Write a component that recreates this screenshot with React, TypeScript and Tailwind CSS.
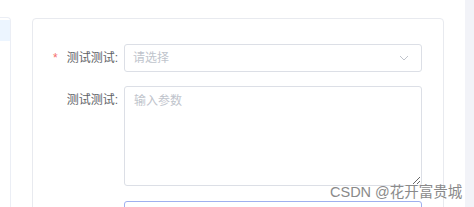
import React from 'react';

const font = { fontFamily: '"Liberation Sans", "Noto Sans CJK SC", sans-serif' };

const Label = ({ text, required }: { text: string; required?: boolean }) => (
  <div className="w-[91px] shrink-0 pr-[6px] text-right text-[12px] leading-[28px] text-[#606266]">
    {required && <span className="mr-[9px] text-[#f56c6c]">*</span>}
    {text}
  </div>
);

const App: React.FC = () => {
  return (
    <div className="relative flex h-[207px] w-[474px] overflow-hidden bg-white" style={font}>
      {/* left side menu edge */}
      <div className="mt-[17px] w-[11px] shrink-0 rounded-tr-[4px] border-r border-t border-[#ebeef5]">
        <div className="mt-[2px] h-[21px] bg-[#ecf5ff]" />
      </div>

      {/* main card */}
      <div className="ml-[21px] mt-[18px] h-[240px] w-[412px] shrink-0 rounded-[4px] border border-[#e8eaef] pt-[25px]">
        <div className="flex">
          <Label text="测试测试:" required />
          <div className="flex h-[28px] w-[298px] items-center justify-between rounded-[3px] border border-[#dcdfe6] pl-[8px] pr-[12px]">
            <span className="text-[12px] text-[#c0c4cc]">请选择</span>
            <svg width="10" height="6" viewBox="0 0 10 6" fill="none">
              <path d="M1 1l4 4 4-4" stroke="#c0c4cc" strokeWidth="1" />
            </svg>
          </div>
        </div>

        <div className="mt-[14px] flex">
          <Label text="测试测试:" />
          <textarea
            placeholder="输入参数"
            className="h-[100px] w-[298px] resize rounded-[3px] border border-[#dcdfe6] px-[9px] py-[6px] text-[12px] leading-[16px] text-[#606266] outline-none placeholder:text-[#c0c4cc]"
          />
        </div>

        <div className="mt-[15px] flex">
          <div className="w-[91px] shrink-0" />
          <div className="h-[28px] w-[298px] rounded-[3px] border border-[#9fb0ef]" />
        </div>
      </div>

      <div className="ml-[21px] h-full flex-1 bg-[#f2f3f8]" />

      {/* watermark */}
      <div className="pointer-events-none absolute left-[330px] top-[182px] text-[14.5px] leading-[20px] text-[#8a8a8a]">
        CSDN @花开富贵城
      </div>
    </div>
  );
};

export default App;
